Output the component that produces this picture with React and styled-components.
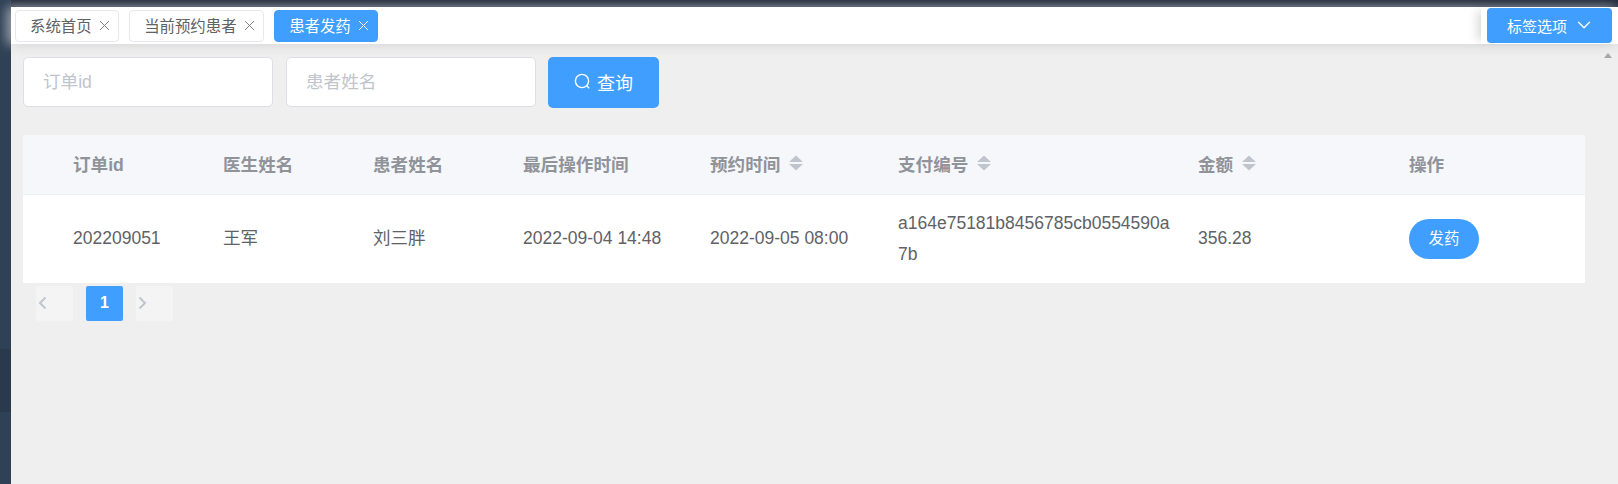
import styled, { createGlobalStyle } from "styled-components";
import { ChevronDown } from "lucide-react";

const GlobalStyle = createGlobalStyle`
  html, body {
    margin: 0;
    height: 100%;
    overflow: hidden;
  }
  body {
    font-family: "Liberation Sans", "Noto Sans CJK SC", sans-serif;
    color: #606266;
  }
`;

const Shell = styled.div`
  display: flex;
  height: 484px;
  width: 1618px;
  overflow: hidden;
  background: #304056;
`;
const Sidebar = styled.aside`
  width: 11px;
  flex: none;
  display: flex;
  flex-direction: column;
  background: #304156;
  padding-top: 349px;
  box-sizing: border-box;
`;
const SidebarActive = styled.div`
  height: 63px;
  background: #2a394c;
`;
const Main = styled.main`
  flex: 1;
  display: flex;
  flex-direction: column;
  min-width: 0;
`;
const TopStrip = styled.div`
  height: 7px;
  flex: none;
  background: linear-gradient(#232b3c, #2f3b50);
`;
const TagBar = styled.div`
  height: 37px;
  flex: none;
  display: flex;
  align-items: center;
  gap: 9.6px;
  padding-left: 3.5px;
  background: #fff;
  box-shadow: 0 0 14px rgba(0, 0, 0, 0.16), -4px 0 12px rgba(255, 255, 255, 0.6);
  position: relative;
  z-index: 1;
`;
const Tag = styled.div`
  height: 32px;
  box-sizing: border-box;
  display: flex;
  align-items: center;
  padding: 0 8px 1px 14.5px;
  gap: 7.5px;
  font-size: 15.4px;
  border-radius: 4px;
  border: 1px solid ${(p) => (p.$active ? "#409eff" : "#e6e8ee")};
  background: ${(p) => (p.$active ? "#409eff" : "#fff")};
  color: ${(p) => (p.$active ? "#fff" : "#606266")};
`;
const CloseMark = styled.svg`
  flex: none;
  margin-top: 1px;
  color: ${(p) => (p.$active ? "#fff" : "#808388")};
`;
const TagOptions = styled.div`
  margin-left: auto;
  width: 137px;
  height: 37px;
  box-sizing: border-box;
  padding: 1px 6px 1px 6px;
  background: #fff;
  box-shadow: -8px 0 10px -4px rgba(0, 0, 0, 0.14);
`;
const OptionsButton = styled.button`
  width: 125px;
  height: 35px;
  border: 0;
  border-radius: 4px;
  background: #409eff;
  color: #fff;
  font: inherit;
  font-size: 15px;
  display: flex;
  align-items: center;
  gap: 6px;
  padding: 0 0 1px 20px;
`;
const Content = styled.div`
  flex: 1;
  position: relative;
  background: #efefef;
  padding: 13px 33px 0 12px;
`;
const ScrollArrow = styled.div`
  position: absolute;
  right: 6px;
  top: 9px;
  width: 0;
  height: 0;
  border-left: 4.5px solid transparent;
  border-right: 4.5px solid transparent;
  border-bottom: 5px solid #a9a9a9;
`;
const SearchRow = styled.div`
  display: flex;
  gap: 13px;
  align-items: flex-start;
`;
const SearchInput = styled.input`
  width: 250px;
  height: 50px;
  box-sizing: border-box;
  border: 1px solid #dcdfe6;
  border-radius: 5px;
  background: #fff;
  padding: 0 19px;
  font: inherit;
  font-size: 17.6px;
  outline: none;
  &::placeholder {
    color: #c0c4cc;
    opacity: 1;
  }
`;
const SearchButton = styled.button`
  width: 111px;
  height: 51px;
  margin-left: -1px;
  border: 0;
  border-radius: 5px;
  background: #409eff;
  color: #fff;
  font: inherit;
  font-size: 18px;
  display: flex;
  align-items: center;
  justify-content: center;
  gap: 6px;
  padding: 0 0 2px;
`;
const DataTable = styled.table`
  margin-top: 27px;
  width: 1562px;
  table-layout: fixed;
  border-collapse: collapse;
  background: #fff;
  font-size: 17.6px;
`;
const HeadCell = styled.th`
  height: 59px;
  box-sizing: border-box;
  padding: 0 0 2px ${(p) => p.$inset || 0}px;
  text-align: left;
  font-weight: 700;
  color: #909399;
  background: #f5f7fa;
  border-bottom: 1px solid #ebeef5;
`;
const HeadInner = styled.span`
  display: inline-flex;
  align-items: center;
  gap: 9px;
`;
const BodyCell = styled.td`
  height: 88px;
  padding: 0 ${(p) => (p.$wrap ? "27px" : "0")} 0 ${(p) => p.$inset || 0}px;
  font-size: 17.5px;
  line-height: 31px;
  color: #606266;
  word-break: break-all;
`;
const PillButton = styled.button`
  width: 70px;
  height: 40px;
  border: 0;
  border-radius: 20px;
  background: #409eff;
  color: #fff;
  font: inherit;
  font-size: 15.4px;
  padding: 0;
  display: block;
`;
const Pager = styled.div`
  display: flex;
  gap: 13px;
  margin: 3px 0 0 13px;
`;
const PageButton = styled.div`
  width: 37px;
  height: 35px;
  border-radius: 2px;
  display: flex;
  align-items: center;
  justify-content: ${(p) => (p.$arrow ? "flex-start" : "center")};
  padding-left: ${(p) => (p.$arrow ? "2px" : "0")};
  box-sizing: border-box;
  background: ${(p) => (p.$active ? "#409eff" : "#f4f4f5")};
  color: #fff;
  font-size: 16px;
  font-weight: 700;
`;

function CloseIcon({ active }) {
  return (
    <CloseMark $active={active} width="11" height="11" viewBox="0 0 11 11" fill="none" stroke="currentColor" strokeWidth="1">
      <path d="M1 1l9 9M10 1l-9 9" />
    </CloseMark>
  );
}

function SearchIcon() {
  return (
    <svg width="17" height="17" viewBox="0 0 17 17" fill="none" stroke="#fff" strokeWidth="1.4">
      <circle cx="8" cy="8" r="6.6" />
      <path d="M12.8 12.8l2.4 2.6" />
    </svg>
  );
}

function SortCaret() {
  return (
    <svg width="14" height="16" viewBox="0 0 14 16" fill="#c0c4cc">
      <path d="M7 0.5L14 7H0zM0 9h14L7 15.5z" />
    </svg>
  );
}

function PagerArrow({ dir }) {
  return (
    <svg width="9" height="14" viewBox="0 0 9 14" fill="none" stroke="#c0c4cc" strokeWidth="2">
      <path d={dir === "left" ? "M7.5 1.5L2 7l5.5 5.5" : "M1.5 1.5L7 7l-5.5 5.5"} />
    </svg>
  );
}

const tags = [
  { label: "系统首页" },
  { label: "当前预约患者" },
  { label: "患者发药", active: true },
];

const columns = [
  { title: "订单id", width: 200, inset: 50 },
  { title: "医生姓名", width: 150 },
  { title: "患者姓名", width: 150 },
  { title: "最后操作时间", width: 187 },
  { title: "预约时间", width: 188, sort: true },
  { title: "支付编号", width: 300, sort: true },
  { title: "金额", width: 211, sort: true },
  { title: "操作", width: 176 },
];

const row = {
  id: "202209051",
  doctor: "王军",
  patient: "刘三胖",
  updated: "2022-09-04 14:48",
  booked: "2022-09-05 08:00",
  payNo: "a164e75181b8456785cb0554590a7b",
  amount: "356.28",
};

export default function App() {
  return (
    <Shell>
      <GlobalStyle />
      <Sidebar>
        <SidebarActive />
      </Sidebar>
      <Main>
        <TopStrip />
        <TagBar>
          {tags.map((tag) => (
            <Tag key={tag.label} $active={tag.active}>
              {tag.label}
              <CloseIcon active={tag.active} />
            </Tag>
          ))}
          <TagOptions>
            <OptionsButton>
              标签选项
              <ChevronDown size={22} strokeWidth={1.5} />
            </OptionsButton>
          </TagOptions>
        </TagBar>
        <Content>
          <ScrollArrow />
          <SearchRow>
            <SearchInput placeholder="订单id" />
            <SearchInput placeholder="患者姓名" />
            <SearchButton>
              <SearchIcon />
              查询
            </SearchButton>
          </SearchRow>
          <DataTable>
            <colgroup>
              {columns.map((col) => (
                <col key={col.title} style={{ width: col.width }} />
              ))}
            </colgroup>
            <thead>
              <tr>
                {columns.map((col) => (
                  <HeadCell key={col.title} $inset={col.inset}>
                    <HeadInner>
                      {col.title}
                      {col.sort && <SortCaret />}
                    </HeadInner>
                  </HeadCell>
                ))}
              </tr>
            </thead>
            <tbody>
              <tr>
                <BodyCell $inset={50}>{row.id}</BodyCell>
                <BodyCell>{row.doctor}</BodyCell>
                <BodyCell>{row.patient}</BodyCell>
                <BodyCell>{row.updated}</BodyCell>
                <BodyCell>{row.booked}</BodyCell>
                <BodyCell $wrap>{row.payNo}</BodyCell>
                <BodyCell>{row.amount}</BodyCell>
                <BodyCell>
                  <PillButton>发药</PillButton>
                </BodyCell>
              </tr>
            </tbody>
          </DataTable>
          <Pager>
            <PageButton $arrow>
              <PagerArrow dir="left" />
            </PageButton>
            <PageButton $active>1</PageButton>
            <PageButton $arrow>
              <PagerArrow dir="right" />
            </PageButton>
          </Pager>
        </Content>
      </Main>
    </Shell>
  );
}
